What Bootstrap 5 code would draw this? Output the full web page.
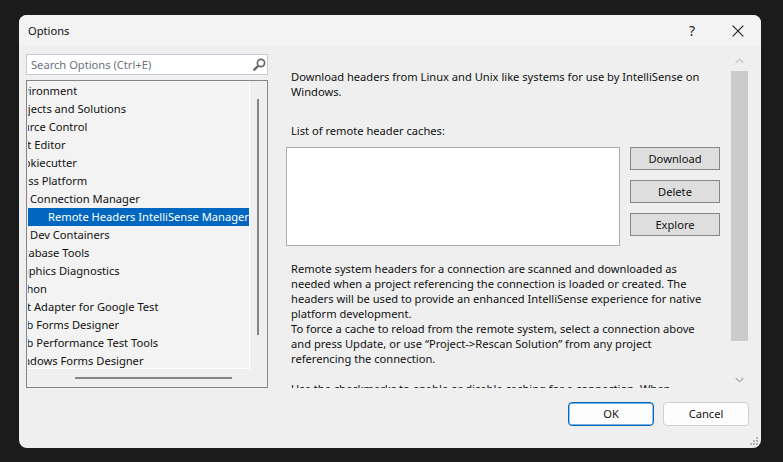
<!DOCTYPE html>
<html lang="en"><head><meta charset="utf-8"><title>Options</title>
<link href="https://cdn.jsdelivr.net/npm/bootstrap@5.3.0/dist/css/bootstrap.min.css" rel="stylesheet">
<style>
html,body{height:100%;overflow:hidden}
body{background:#1b1b1b;font-family:"Noto Sans","Liberation Sans",sans-serif;font-size:11.15px;line-height:15px;color:#111;padding:15px 22px 14px 19px}
.dlg{position:relative;height:433px;background:#efefef;border-radius:8px;overflow:hidden}
.titlebar{height:31px;background:#f3f3f3;padding-left:9px;padding-right:17px}
.helpq{font-size:14px;width:46px;text-align:center;color:#222}
.closex{margin-left:17px}
.leftcol{width:242px;margin-left:7px;margin-top:8px}
.searchbox{height:21px;background:#fff;border:1px solid #c9cad8;padding:0 1px 0 4px;color:#6c6f7c}
.treebox{height:308px;margin-top:5px;border:1px solid #85858d;background:#efefef}
.treeview{width:222px;height:288px;background:#f3f3f3;border-bottom:1px solid #fff;border-right:1px solid #fff;overflow:hidden;padding-top:1px;margin-left:1px}
.treerow{height:18px;line-height:17px;white-space:nowrap}
.lv1{margin-left:-18px}.lv2{margin-left:2px}
.lv3{padding-left:20px}
.treerow.sel{background:#0067c0;color:#fff}
.vtrack{width:18px;padding-top:18px}
.vth{width:2px;height:236px;background:#858585;margin-left:7px}
.hth{width:157px;height:2px;background:#858585;margin:8px 0 0 48px}
.rightpane{margin-left:18px;width:444px;height:342px;overflow:hidden;padding-top:23px}
.para{white-space:nowrap;padding-left:5px}
.gapa{margin-top:24px}
.gapb{margin-top:15px}
.lstrow{margin-top:9px}
.lst{width:334px;height:99px;background:#fff;border:1px solid #ababab}
.btncol{gap:10px;margin-left:10px}
.sbtn{width:90px;height:23px;background:#dedede;border:1px solid #85858d;line-height:21px;text-align:center}
.sbcol{width:17px;margin-left:1px;margin-top:5px}
.sbth{height:270px;background:#cbcbcb}
.arw{height:20px}
.arwdn{margin-top:29px}
.footer{padding:12px 12px 0 0;gap:9px}
.fbtn{width:86px;height:24px;background:#fdfdfd;border:1px solid #d0d0d0;border-radius:4px;line-height:22px;text-align:center}
.fbtn.pri{border-color:#0067c0;box-shadow:inset 0 0 0 .4px #0067c0}
.grip{position:absolute;right:2px;bottom:2px}
</style></head><body>
<div class="dlg d-flex flex-column">
 <div class="titlebar d-flex align-items-center justify-content-between flex-shrink-0">
  <span>Options</span>
  <div class="d-flex align-items-center">
   <span class="helpq">?</span>
   <svg width="12" height="12" viewBox="0 0 12 12" class="closex"><path d="M.7.7l10.6 10.6M11.3.7L.7 11.3" stroke="#1a1a1a" fill="none" stroke-width="1.1"/></svg>
  </div>
 </div>
 <div class="d-flex flex-shrink-0">
  <div class="leftcol flex-shrink-0">
   <div class="searchbox d-flex align-items-center justify-content-between">
    <span>Search Options (Ctrl+E)</span>
    <svg width="14" height="14" viewBox="0 0 14 14"><circle cx="9" cy="5" r="3.6" fill="none" stroke="#6a6a6a" stroke-width="1.7"/><path d="M6.2 7.8L1.6 12.4" stroke="#6a6a6a" stroke-width="2.4"/></svg>
   </div>
   <div class="treebox">
    <div class="d-flex">
     <div class="treeview flex-shrink-0">
      <div class="treerow lv1">Environment</div>
      <div class="treerow lv1">Projects and Solutions</div>
      <div class="treerow lv1">Source Control</div>
      <div class="treerow lv1">Text Editor</div>
      <div class="treerow lv1">Cookiecutter</div>
      <div class="treerow lv1">Cross Platform</div>
      <div class="treerow lv2">Connection Manager</div>
      <div class="treerow sel lv3">Remote Headers IntelliSense Manager</div>
      <div class="treerow lv2">Dev Containers</div>
      <div class="treerow lv1">Database Tools</div>
      <div class="treerow lv1">Graphics Diagnostics</div>
      <div class="treerow lv1">Python</div>
      <div class="treerow lv1">Test Adapter for Google Test</div>
      <div class="treerow lv1">Web Forms Designer</div>
      <div class="treerow lv1">Web Performance Test Tools</div>
      <div class="treerow lv1">Windows Forms Designer</div>
     </div>
     <div class="vtrack"><div class="vth"></div></div>
    </div>
    <div class="hth"></div>
   </div>
  </div>
  <div class="rightpane flex-shrink-0">
   <div class="para">Download headers from Linux and Unix like systems for use by IntelliSense on<br>Windows.</div>
   <div class="para gapa">List of remote header caches:</div>
   <div class="d-flex lstrow">
    <div class="lst flex-shrink-0"></div>
    <div class="d-flex flex-column btncol">
     <div class="sbtn">Download</div><div class="sbtn">Delete</div><div class="sbtn">Explore</div>
    </div>
   </div>
   <div class="para gapb">Remote system headers for a connection are scanned and downloaded as<br>needed when a project referencing the connection is loaded or created. The<br>headers will be used to provide an enhanced IntelliSense experience for native<br>platform development.<br>To force a cache to reload from the remote system, select a connection above<br>and press Update, or use “Project-&gt;Rescan Solution” from any project<br>referencing the connection.<br><br>Use the checkmarks to enable or disable caching for a connection. When</div>
  </div>
  <div class="sbcol flex-shrink-0">
   <div class="arw d-flex align-items-center justify-content-center"><svg width="9" height="6" viewBox="0 0 9 6"><path d="M.7 5L4.5 1.2 8.3 5" fill="none" stroke="#c2c2c2" stroke-width="1.1"/></svg></div>
   <div class="sbth"></div>
   <div class="arw arwdn d-flex align-items-center justify-content-center"><svg width="9" height="6" viewBox="0 0 9 6"><path d="M.7 1L4.5 4.8 8.3 1" fill="none" stroke="#a6a6a6" stroke-width="1.1"/></svg></div>
  </div>
 </div>
 <div class="footer d-flex justify-content-end"><div class="fbtn pri">OK</div><div class="fbtn">Cancel</div></div>
 <svg class="grip" width="10" height="10" viewBox="0 0 10 10" fill="#b5b5b5"><rect x="7" y="1" width="2" height="2"/><rect x="4" y="4" width="2" height="2"/><rect x="7" y="4" width="2" height="2"/><rect x="1" y="7" width="2" height="2"/><rect x="4" y="7" width="2" height="2"/><rect x="7" y="7" width="2" height="2"/></svg>
</div>
</body></html>
